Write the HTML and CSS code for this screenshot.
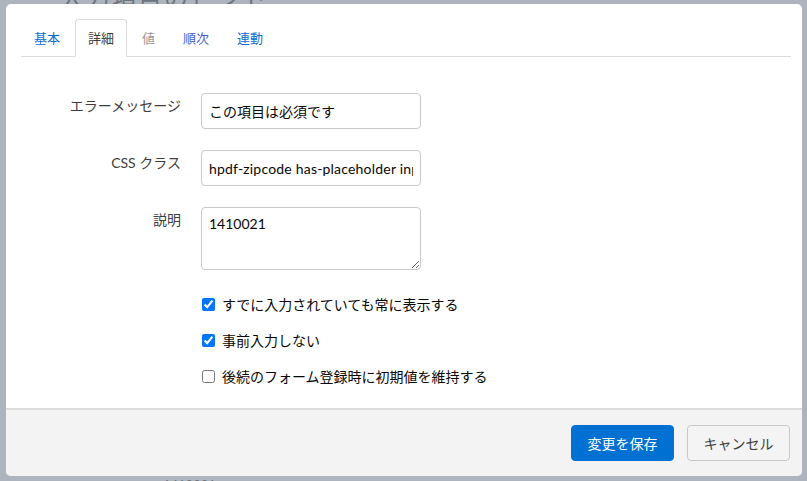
FILE: index.html
```html
<!DOCTYPE html>
<html lang="ja">
<head>
<meta charset="utf-8">
<title>項目の詳細</title>
<link rel="stylesheet" href="styles.css">
</head>
<body>
<div class="page">
  <div class="page-title">入力項目のヒント</div>
  <div class="page-value">1410021</div>
</div>

<div class="modal">
  <div class="modal-body">
    <ul class="tabs">
      <li class="tab link">基本</li>
      <li class="tab active">詳細</li>
      <li class="tab disabled">値</li>
      <li class="tab visited">順次</li>
      <li class="tab link">連動</li>
    </ul>

    <div class="form">
      <label class="label" for="err">エラーメッセージ</label>
      <input class="input" id="err" type="text" value="この項目は必須です">

      <label class="label" for="css">CSS クラス</label>
      <input class="input latin" id="css" type="text" value="hpdf-zipcode has-placeholder input-zip">

      <label class="label" for="desc">説明</label>
      <textarea class="textarea" id="desc">1410021</textarea>

      <div class="checks">
        <label class="check"><input type="checkbox" checked><span>すでに入力されていても常に表示する</span></label>
        <label class="check"><input type="checkbox" checked><span>事前入力しない</span></label>
        <label class="check"><input type="checkbox"><span>後続のフォーム登録時に初期値を維持する</span></label>
      </div>
    </div>
  </div>

  <div class="modal-footer">
    <button class="btn btn-brand" type="button">変更を保存</button>
    <button class="btn btn-neutral" type="button">キャンセル</button>
  </div>
</div>
</body>
</html>
```

FILE: styles.css
```css
* {
  box-sizing: border-box;
}

html, body {
  margin: 0;
  padding: 0;
}

body {
  width: 807px;
  height: 481px;
  overflow: hidden;
  background: #adb4bd;
  font-family: Lato, "Noto Sans CJK JP", sans-serif;
  color: #3e3e3c;
  position: relative;
}

.page {
  height: 481px;
  display: flex;
  flex-direction: column;
  justify-content: space-between;
}

.page-title {
  margin-top: -16px;
  padding-left: 60px;
  font-size: 24px;
  line-height: 28px;
  color: #6f757d;
  letter-spacing: 2px;
}

.page-value {
  padding-left: 163px;
  margin-bottom: -12px;
  font-size: 13px;
  line-height: 16px;
  color: #6f757d;
}

.modal {
  position: absolute;
  left: 6px;
  top: 4px;
  width: 796px;
  height: 472px;
  background: #ffffff;
  border-radius: 5px;
  display: flex;
  flex-direction: column;
  overflow: hidden;
}

.modal-body {
  flex: 1;
  padding: 15px 11px 0 15px;
  border-bottom: 2px solid #dddbda;
}

.tabs {
  list-style: none;
  margin: 0;
  padding: 0;
  display: flex;
  gap: 2px;
  border-bottom: 1px solid #dddbda;
  height: 38px;
}

.tab {
  height: 38px;
  padding: 0 12px;
  border: 1px solid transparent;
  border-radius: 4px 4px 0 0;
  font-size: 13px;
  line-height: 36px;
  cursor: pointer;
}

.tab.link {
  color: #0b6fd0;
}

.tab.visited {
  color: #4a5dd6;
}

.tab.disabled {
  color: #9a9896;
}

.tab.active {
  color: #3e3e3c;
  background: #ffffff;
  border-color: #dddbda;
  border-bottom-color: #ffffff;
}

.form {
  margin-top: 36px;
  margin-left: -15px;
  display: grid;
  grid-template-columns: 175px 220px;
  column-gap: 20px;
  row-gap: 21px;
  align-items: start;
}

.label {
  text-align: right;
  font-size: 14px;
  line-height: 20px;
  padding-top: 3px;
  color: #3e3e3c;
}

.input {
  width: 220px;
  height: 36px;
  padding: 0 7px;
  border: 1px solid #c9c9c9;
  border-radius: 4px;
  font-family: Lato, "Noto Sans CJK JP", sans-serif;
  font-size: 14px;
  color: #080707;
  background: #ffffff;
  outline: none;
}

.input.latin {
  letter-spacing: 0.2px;
}

.textarea {
  width: 220px;
  height: 63px;
  padding: 6px 7px;
  border: 1px solid #c9c9c9;
  border-radius: 4px;
  font-family: Lato, "Noto Sans CJK JP", sans-serif;
  font-size: 14px;
  line-height: 20px;
  color: #080707;
  background: #ffffff;
  outline: none;
  resize: vertical;
  display: block;
}

.checks {
  grid-column: 2;
  margin-top: 3px;
  display: flex;
  flex-direction: column;
  gap: 16px;
}

.check {
  display: flex;
  align-items: center;
  gap: 7px;
  height: 20px;
  font-size: 14px;
  color: #080707;
  white-space: nowrap;
}

.check input {
  margin: 0 0 0 1px;
  width: 13px;
  height: 13px;
}

.modal-footer {
  flex: none;
  height: 66px;
  background: #f3f3f3;
  display: flex;
  justify-content: flex-end;
  align-items: flex-start;
  gap: 13px;
  padding: 15px 12px 0 0;
}

.btn {
  height: 36px;
  width: 103px;
  border-radius: 4px;
  font-family: Lato, "Noto Sans CJK JP", sans-serif;
  font-size: 14px;
  cursor: pointer;
}

.btn-brand {
  background: #0070d2;
  border: 1px solid #0070d2;
  color: #ffffff;
}

.btn-neutral {
  background: #f4f4f4;
  border: 1px solid #c9c9c9;
  color: #3e3e3c;
}
```
